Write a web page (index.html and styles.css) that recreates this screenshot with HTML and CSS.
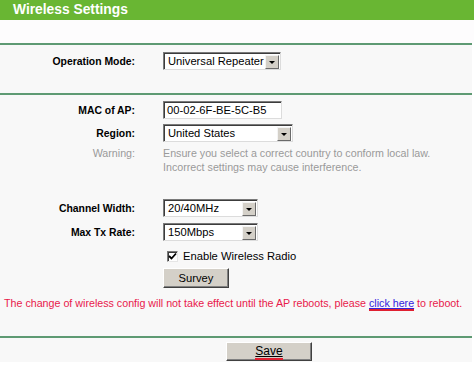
FILE: index.html
```html
<!DOCTYPE html>
<html>
<head>
<meta charset="utf-8">
<link rel="stylesheet" href="styles.css">
</head>
<body>
<div class="page">
  <div class="header">Wireless Settings</div>
  <div class="band"></div>
  <div class="rule"></div>
  <div class="section s1">
    <div class="row">
      <div class="label">Operation Mode:</div>
      <div class="ctl"><div class="select w118"><span class="val">Universal Repeater</span><span class="arrow"></span></div></div>
    </div>
  </div>
  <div class="rule"></div>
  <div class="section s2">
    <div class="row">
      <div class="label">MAC of AP:</div>
      <div class="ctl"><div class="input w119">00-02-6F-BE-5C-B5</div></div>
    </div>
    <div class="row">
      <div class="label">Region:</div>
      <div class="ctl"><div class="select w130"><span class="val">United States</span><span class="arrow"></span></div></div>
    </div>
    <div class="row warn">
      <div class="label light">Warning:</div>
      <div class="ctl note">Ensure you select a correct country to conform local law.<br>Incorrect settings may cause interference.</div>
    </div>
    <div class="row mt">
      <div class="label">Channel Width:</div>
      <div class="ctl"><div class="select w95"><span class="val">20/40MHz</span><span class="arrow"></span></div></div>
    </div>
    <div class="row">
      <div class="label">Max Tx Rate:</div>
      <div class="ctl"><div class="select w95"><span class="val">150Mbps</span><span class="arrow"></span></div></div>
    </div>
    <div class="row chk">
      <div class="label"></div>
      <div class="ctl checkline"><span class="box"><svg width="9" height="9" viewBox="0 0 9 9"><path d="M1 4 L3.5 6.5 L8 1.5" fill="none" stroke="#000" stroke-width="1.8"/></svg></span>Enable Wireless Radio</div>
    </div>
    <div class="row btnrow">
      <div class="label"></div>
      <div class="ctl"><div class="btn survey">Survey</div></div>
    </div>
    <div class="alert">The change of wireless config will not take effect until the AP reboots, please <span class="link">click here</span> to reboot.</div>
  </div>
  <div class="rule"></div>
  <div class="section s3">
    <div class="btn save"><span class="savetext">Save</span></div>
  </div>
</div>
</body>
</html>
```

FILE: styles.css
```css
html, body {
  margin: 0;
  padding: 0;
  background: #ffffff;
}
body {
  font-family: "Liberation Sans", Arial, sans-serif;
  font-size: 10.7px;
  color: #000;
}
.page {
  width: 474px;
}
.header {
  height: 20px;
  background: #69b633;
  color: #fff;
  font-weight: bold;
  font-size: 13.8px;
  line-height: 20px;
  padding-left: 13px;
  box-sizing: border-box;
}
.band {
  height: 23px;
  background: #fdfcfd;
}
.rule {
  height: 2px;
  background: #5e9a73;
  margin-right: 2px;
}
.section {
  background: #f8f8f8;
  margin-right: 2px;
}
.s1 {
  padding-top: 7px;
  height: 48px;
  box-sizing: border-box;
}
.s2 {
  padding-top: 6px;
  height: 241px;
  box-sizing: border-box;
}
.s3 {
  height: 24px;
  padding-top: 4px;
  box-sizing: border-box;
  display: flex;
}
.row {
  display: grid;
  grid-template-columns: 135px 1fr;
  column-gap: 28px;
  align-items: center;
  height: 18px;
  margin-bottom: 5px;
}
.label {
  text-align: right;
  font-weight: bold;
  font-size: 10.4px;
}
.label.light {
  font-weight: normal;
  color: #9a9a9a;
  font-size: 10.7px;
}
.warn {
  align-items: start;
  height: 28px;
  margin-top: -1px;
  line-height: 14px;
}
.note {
  color: #9a9a9a;
  line-height: 14px;
}
.mt {
  margin-top: 25px;
  margin-bottom: 6px;
}
.select, .input {
  height: 18px;
  box-sizing: border-box;
  background: #fff;
  border: 1px solid;
  border-color: #7a7a7a #dcdcdc #dcdcdc #7a7a7a;
  box-shadow: inset 1px 1px 0 #3c3c3c;
  display: flex;
  align-items: center;
  padding: 0 1px 0 4px;
  font-size: 11.2px;
}
.input {
  border-color: #7a7a7a #dcdcdc #dcdcdc #7a7a7a;
  padding-left: 3px;
}
.val {
  flex: 1;
  white-space: nowrap;
}
.arrow {
  width: 14px;
  height: 14px;
  box-sizing: border-box;
  background: #d4d0c8;
  border: 1px solid;
  border-color: #f4f4f4 #6a6a6a #6a6a6a #f4f4f4;
  position: relative;
  margin-top: 1px;
}
.arrow::after {
  content: "";
  position: absolute;
  left: 3px;
  top: 5px;
  border-left: 3.5px solid transparent;
  border-right: 3.5px solid transparent;
  border-top: 3px solid #000;
}
.w118 { width: 118px; }
.w119 { width: 119px; }
.w130 { width: 130px; }
.w95 { width: 95px; }
.chk {
  height: 20px;
  margin-top: 0;
  margin-bottom: 2px;
}
.checkline {
  display: flex;
  align-items: center;
  font-size: 11.2px;
  padding-left: 4px;
}
.box {
  width: 11px;
  height: 11px;
  box-sizing: border-box;
  background: #fff;
  border: 1px solid;
  border-color: #7a7a7a #e6e6e6 #e6e6e6 #7a7a7a;
  box-shadow: inset 1px 1px 0 #3c3c3c;
  display: flex;
  align-items: center;
  justify-content: center;
  margin-right: 5px;
}
.btnrow {
  height: 20px;
  margin-bottom: 0;
}
.btn {
  background: #d4d0c8;
  border: 1px solid;
  border-color: #ffffff #404040 #404040 #ffffff;
  box-shadow: inset -1px -1px 0 #808080;
  box-sizing: border-box;
  text-align: center;
}
.survey {
  width: 66px;
  height: 20px;
  line-height: 18px;
  font-size: 11.2px;
}
.alert {
  color: #e8194b;
  font-size: 10.7px;
  line-height: 14px;
  margin-top: 8px;
  padding-left: 4px;
  white-space: nowrap;
}
.link {
  color: #3322dd;
  text-decoration: underline;
  border-bottom: 2px solid #e02030;
  padding-bottom: 0px;
}
.save {
  width: 86px;
  height: 19px;
  margin-left: 226px;
  line-height: 16px;
  font-size: 12px;
}
.savetext {
  text-decoration: underline;
  border-bottom: 2px solid #e02030;
}
```
